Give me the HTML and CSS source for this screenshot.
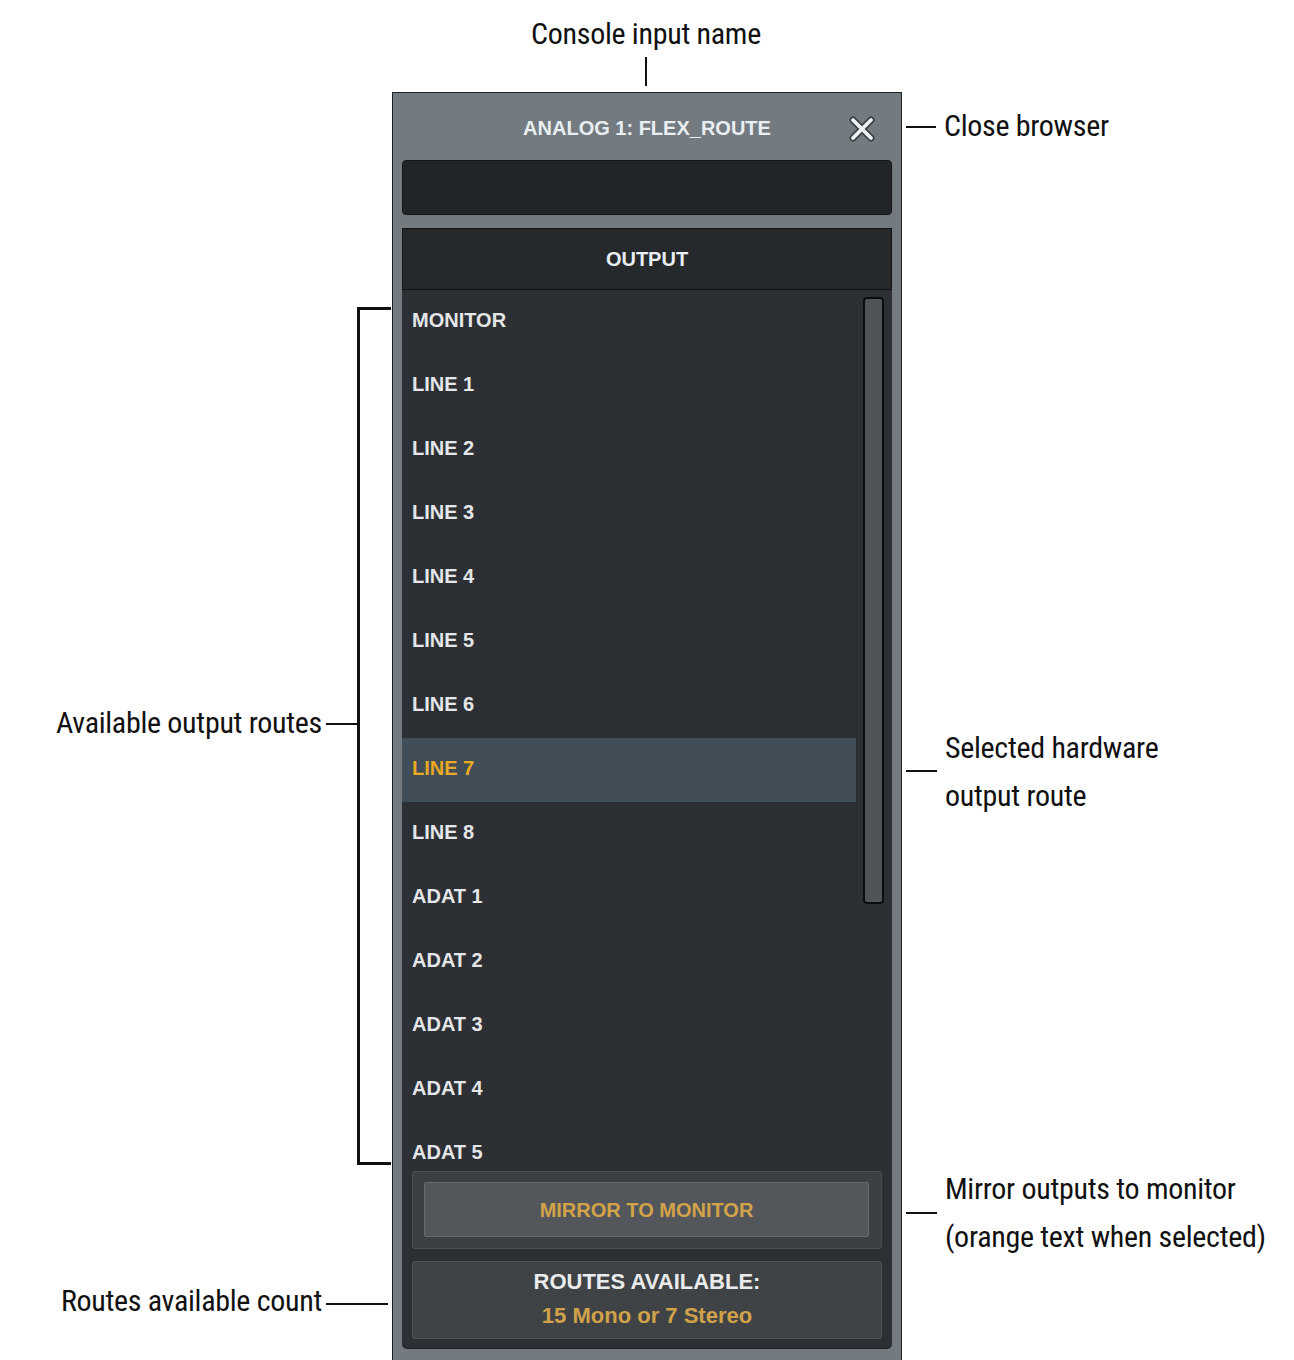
FILE: index.html
```html
<!DOCTYPE html>
<html>
<head>
<meta charset="utf-8">
<link rel="stylesheet" href="styles.css">
</head>
<body>
<div class="stage">
  <div class="panel">
    <div class="title">
      <span>ANALOG 1: FLEX_ROUTE</span>
      <svg class="close" width="26" height="26" viewBox="0 0 26 26">
        <path d="M4 4 L22 22 M22 4 L4 22" stroke="#3a3f43" stroke-width="7" stroke-linecap="round"/>
        <path d="M4 4 L22 22 M22 4 L4 22" stroke="#eef1f3" stroke-width="3.8" stroke-linecap="round"/>
      </svg>
    </div>
    <div class="search"></div>
    <div class="header">OUTPUT</div>
    <div class="list">
      <div class="rows">
        <div class="row">MONITOR</div>
        <div class="row">LINE 1</div>
        <div class="row">LINE 2</div>
        <div class="row">LINE 3</div>
        <div class="row">LINE 4</div>
        <div class="row">LINE 5</div>
        <div class="row">LINE 6</div>
        <div class="row selected">LINE 7</div>
        <div class="row">LINE 8</div>
        <div class="row">ADAT 1</div>
        <div class="row">ADAT 2</div>
        <div class="row">ADAT 3</div>
        <div class="row">ADAT 4</div>
        <div class="row">ADAT 5</div>
      </div>
      <div class="scrollbar"></div>
      <div class="footer">
        <div class="mirror-box">
          <div class="mirror-btn">MIRROR TO MONITOR</div>
        </div>
        <div class="routes-box">
          <div class="routes-label">ROUTES AVAILABLE:</div>
          <div class="routes-count">15 Mono or 7 Stereo</div>
        </div>
      </div>
    </div>
  </div>

  <div class="note note-top">Console input name</div>
  <div class="vline v-top"></div>

  <div class="note note-close">Close browser</div>
  <div class="hline h-close"></div>

  <div class="note note-left note-routes">Available output routes</div>
  <div class="hline h-routes"></div>
  <div class="bracket"></div>

  <div class="note note-selected">Selected hardware<br>output route</div>
  <div class="hline h-selected"></div>

  <div class="note note-mirror">Mirror outputs to monitor<br>(orange text when selected)</div>
  <div class="hline h-mirror"></div>

  <div class="note note-left note-count">Routes available count</div>
  <div class="hline h-count"></div>
</div>
</body>
</html>
```
FILE: styles.css
```css
html, body {
  margin: 0;
  padding: 0;
  background: #ffffff;
}

.stage {
  position: relative;
  width: 1294px;
  height: 1360px;
  overflow: hidden;
}

/* ---------- panel ---------- */
.panel {
  box-sizing: border-box;
  margin: 92px 0 0 392px;
  width: 510px;
  height: 1268px;
  background: #737b80;
  border: 1px solid #1e2022;
  border-bottom: none;
  padding: 0 9px;
  font-family: "Liberation Sans", Arial, sans-serif;
  font-weight: bold;
  font-size: 20px;
}

.title {
  position: relative;
  height: 67px;
  display: flex;
  align-items: center;
  justify-content: center;
  color: #e9eef2;
  padding-top: 4px;
  box-sizing: border-box;
}

.close {
  position: absolute;
  right: 17px;
  top: 23px;
}

.search {
  box-sizing: border-box;
  height: 55px;
  background: #222528;
  border: 1px solid #15171a;
  border-radius: 4px;
}

.header {
  box-sizing: border-box;
  margin-top: 13px;
  height: 62px;
  background: #25292c;
  border: 1px solid #121416;
  color: #e9eef2;
  display: flex;
  align-items: center;
  justify-content: center;
}

.list {
  position: relative;
  height: 1058px;
  background: #2c3034;
  border-radius: 0 0 5px 5px;
  box-shadow: 0 1px 0 #1e2124;
}

.rows {
  width: 454px;
  height: 875px;
  overflow: hidden;
}

.row {
  box-sizing: border-box;
  height: 64px;
  padding: 0 0 4px 10px;
  display: flex;
  align-items: center;
  color: #e4e6e8;
}

.row.selected {
  background: #424e57;
  color: #eaa922;
}

.scrollbar {
  position: absolute;
  left: 461px;
  top: 7px;
  width: 21px;
  height: 607px;
  box-sizing: border-box;
  background: #4f5458;
  border: 2px solid #0b0c0d;
  border-radius: 4px;
}

.footer {
  padding: 6px 10px 0 10px;
  display: flex;
  flex-direction: column;
  gap: 12px;
}

.mirror-box {
  box-sizing: border-box;
  height: 78px;
  background: #3c4044;
  border: 1px solid #4b4f53;
  border-radius: 3px;
  padding: 10px 12px 11px 11px;
}

.mirror-btn {
  box-sizing: border-box;
  height: 55px;
  background: #53575b;
  border: 1px solid #686b6e;
  border-radius: 2px;
  display: flex;
  align-items: center;
  justify-content: center;
  color: #d3a34a;
  padding-top: 2px;
}

.routes-box {
  box-sizing: border-box;
  height: 78px;
  background: #404346;
  border: 1px solid #4e5155;
  border-radius: 3px;
  display: flex;
  flex-direction: column;
  align-items: center;
  justify-content: center;
  font-size: 22px;
  line-height: 34px;
  padding-bottom: 3px;
}

.routes-label {
  color: #e9ebec;
}

.routes-count {
  color: #d2a24a;
}

/* ---------- annotations ---------- */
.note {
  position: absolute;
  font-family: "Roboto Condensed", "Liberation Sans Narrow", "DejaVu Sans Condensed", "Roboto", sans-serif;
  font-size: 30px;
  letter-spacing: -0.3px;
  line-height: 48px;
  color: #111111;
  white-space: nowrap;
}

.note-top {
  left: 0;
  width: 1292px;
  text-align: center;
  top: 10px;
}

.note-close {
  left: 944px;
  top: 102px;
}

.note-left {
  right: 972px;
  text-align: right;
}

.note-routes {
  top: 699px;
}

.note-count {
  top: 1277px;
}

.note-selected {
  left: 945px;
  top: 724px;
}

.note-mirror {
  left: 945px;
  top: 1165px;
}

.vline {
  position: absolute;
  width: 2px;
  background: #111;
}

.v-top {
  left: 645px;
  top: 57px;
  height: 29px;
}

.hline {
  position: absolute;
  height: 2px;
  background: #111;
}

.h-close {
  left: 906px;
  top: 126px;
  width: 30px;
}

.h-routes {
  left: 326px;
  top: 723px;
  width: 32px;
}

.h-selected {
  left: 906px;
  top: 770px;
  width: 31px;
}

.h-mirror {
  left: 906px;
  top: 1212px;
  width: 31px;
}

.h-count {
  left: 326px;
  top: 1303px;
  width: 62px;
}

.bracket {
  position: absolute;
  left: 357px;
  top: 307px;
  width: 31px;
  height: 852px;
  border: 3px solid #111;
  border-right: none;
}
```
